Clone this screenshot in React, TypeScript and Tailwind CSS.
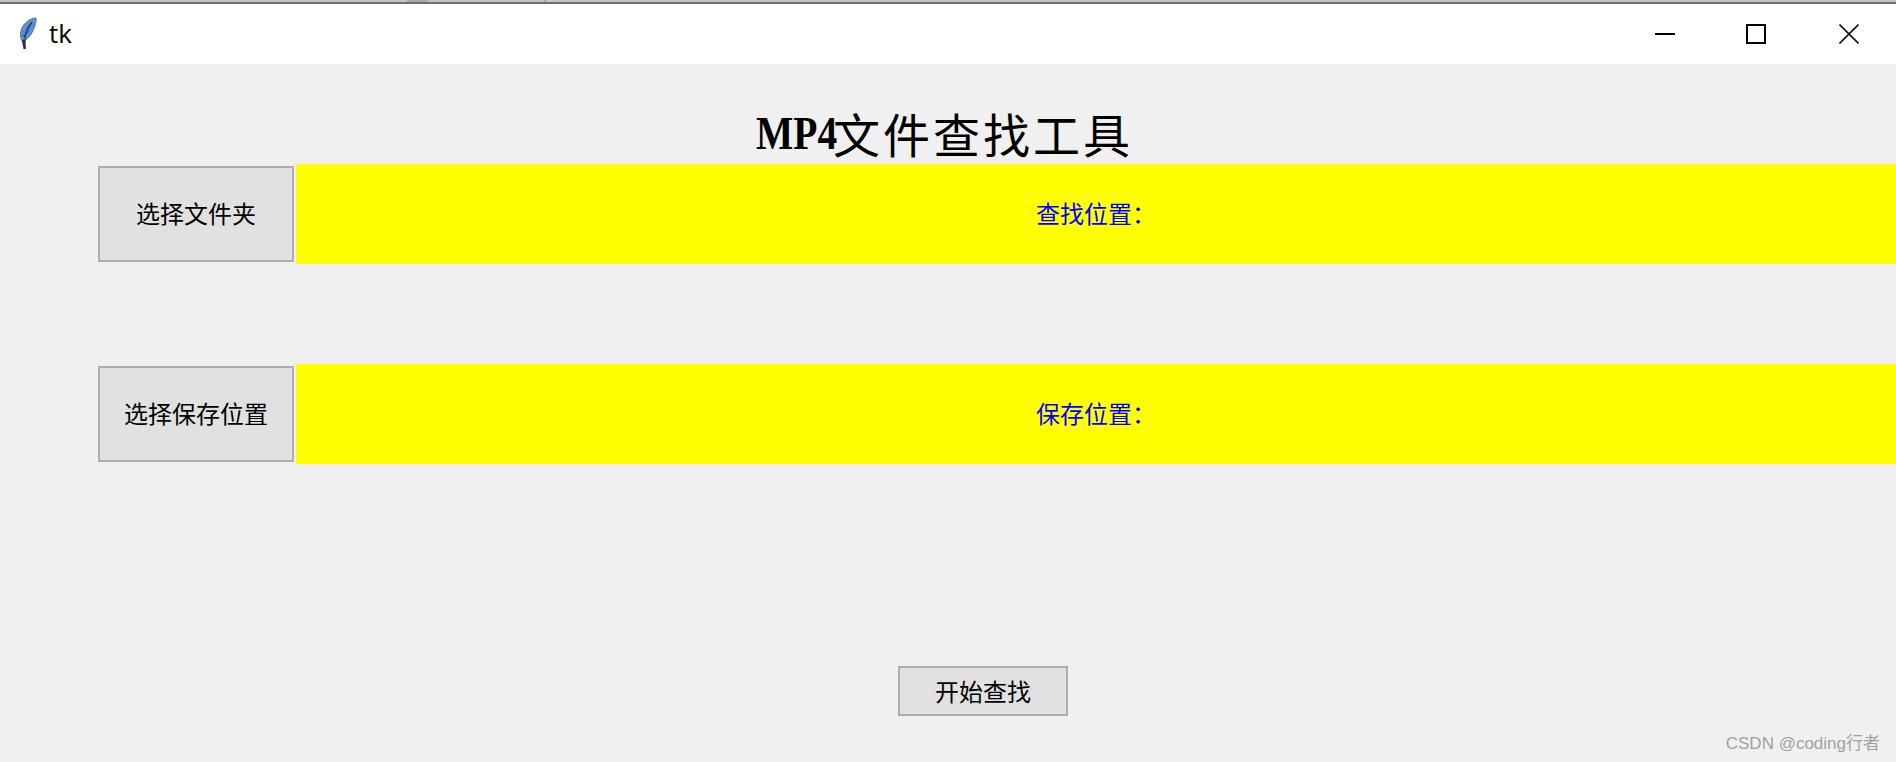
import React from "react";

const cjk = "font-['Microsoft_YaHei','Noto_Sans_CJK_SC',sans-serif]";

const Feather = () => (
  <svg width="18" height="32" viewBox="0 0 18 32" fill="none">
    <path d="M17 1C11 1 5 6 2.500 12C1 16 1 20 3 24C9 23 13 17 15.500 10C16.500 7 17.500 4 17 1Z" fill="#5b8fd6" stroke="#6b7480" strokeWidth="1" />
    <path d="M13 5C9 10 7 15 5.500 21" stroke="#1f3f70" strokeWidth="1.800" />
    <path d="M3 19C5 18 8 17 10 14" stroke="#2f5590" strokeWidth="1" />
    <path d="M3 23C3 26 4 28 4.500 32L7 32C7 28 6 26 7 22Z" fill="#333333" />
  </svg>
);

const WindowButtons = () => (
  <div className="flex items-center">
    <svg width="20" height="20" viewBox="0 0 20 20" className="mr-[71px]">
      <path d="M0 10H20" stroke="#000" strokeWidth="2" />
    </svg>
    <svg width="20" height="20" viewBox="0 0 20 20" className="mr-[73px]">
      <rect x="1" y="1" width="18" height="18" fill="none" stroke="#000" strokeWidth="2" />
    </svg>
    <svg width="20" height="20" viewBox="0 0 20 20">
      <path d="M0.500 0.500L19.500 19.500M19.500 0.500L0.500 19.500" stroke="#111" strokeWidth="1.600" />
    </svg>
  </div>
);

const PickerRow: React.FC<{ button: string; label: string }> = ({ button, label }) => (
  <div className="flex h-[100px] pl-[98px]">
    <button className="my-[2px] h-[96px] w-[196px] border-2 border-[#adadad] bg-[#e1e1e1] pb-[3px] text-[24px] leading-none text-black">
      {button}
    </button>
    <div className="ml-[2px] flex flex-1 items-center justify-center bg-[#ffff00] pb-[3px] text-[24px] leading-none text-[#0000ff]">
      {label}
    </div>
  </div>
);

export default function App() {
  return (
    <div className={`relative flex h-[762px] w-full flex-col overflow-hidden bg-[#f0f0f0] ${cjk}`}>
      {/* kawałek okna pod spodem */}
      <div className="flex h-[4px] flex-col">
        <div className="flex h-[2px] bg-[#c4c4c4]">
          <div className="ml-[407px] w-[21px] bg-[#a8a8a8]" />
          <div className="ml-[117px] w-[1px] bg-[#8a8a8a]" />
        </div>
        <div className="h-[2px] bg-[#6f6f6f]" />
      </div>

      {/* Pasek tytułu */}
      <div className="flex h-[60px] items-center justify-between bg-white pl-[19px] pr-[37px]">
        <div className="flex items-center pb-[3px]">
          <Feather />
          <span className="ml-[12px] font-['Open_Sans',sans-serif] text-[26px] leading-none text-black">tk</span>
        </div>
        <WindowButtons />
      </div>

      {/* Nagłówek */}
      <div className="flex h-[100px] items-end pb-[6px] pl-[756px]">
        <span className="flex items-center text-[47px] font-normal leading-[50px] tracking-[3px] text-black">
          <span className="inline-block w-[77px] origin-left scale-x-[0.84] font-['Liberation_Serif',serif] text-[47px] font-bold tracking-normal">
            MP4
          </span>
          文件查找工具
        </span>
      </div>

      <PickerRow button="选择文件夹" label="查找位置：" />
      <div className="h-[100px]" />
      <PickerRow button="选择保存位置" label="保存位置：" />

      <div className="mt-[202px] pl-[898px]">
        <button className="h-[50px] w-[170px] border-2 border-[#adadad] bg-[#e1e1e1] pb-[1px] text-[24px] leading-none text-black">
          开始查找
        </button>
      </div>

      <span className="absolute bottom-[10px] right-[16px] font-['Liberation_Sans','Noto_Sans_CJK_SC',sans-serif] text-[17px] leading-none text-[#a0a0a0]">
        CSDN @coding行者
      </span>
    </div>
  );
}
